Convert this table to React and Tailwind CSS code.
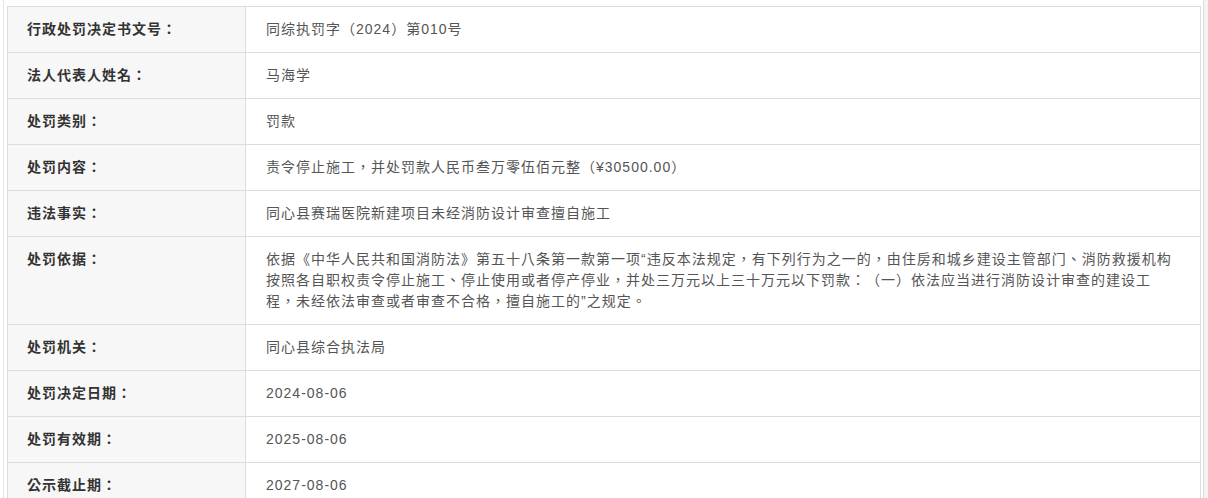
import React from "react";

const rows = [
  ["行政处罚决定书文号：", "同综执罚字（2024）第010号"],
  ["法人代表人姓名：", "马海学"],
  ["处罚类别：", "罚款"],
  ["处罚内容：", "责令停止施工，并处罚款人民币叁万零伍佰元整（¥30500.00）"],
  ["违法事实：", "同心县赛瑞医院新建项目未经消防设计审查擅自施工"],
  [
    "处罚依据：",
    "依据《中华人民共和国消防法》第五十八条第一款第一项\u201c违反本法规定，有下列行为之一的，由住房和城乡建设主管部门、消防救援机构按照各自职权责令停止施工、停止使用或者停产停业，并处三万元以上三十万元以下罚款：（一）依法应当进行消防设计审查的建设工程，未经依法审查或者审查不合格，擅自施工的\u201d之规定。",
  ],
  ["处罚机关：", "同心县综合执法局"],
  ["处罚决定日期：", "2024-08-06"],
  ["处罚有效期：", "2025-08-06"],
  ["公示截止期：", "2027-08-06"],
];

export default function App() {
  return (
    <div
      className="w-[1208px] h-[498px] overflow-hidden bg-white flex [text-spacing-trim:space-all]"
      style={{ fontFamily: '"Liberation Sans", "Noto Sans CJK TC", "Noto Sans CJK SC", sans-serif' }}
    >
      <div className="w-[3px] shrink-0" />
      <div className="w-px shrink-0 bg-[#e6e6e6]" />
      <div className="w-[3px] shrink-0" />
      <div className="w-[1194px] shrink-0 pt-[6px]">
        <div className="border-t border-l border-[#dcdcdc]">
          {rows.map(([label, value], i) => (
            <div key={i} className="flex border-b border-[#dcdcdc]">
              <div className="w-[238px] shrink-0 bg-[#f7f7f7] border-r border-[#dcdcdc] pl-[19px] pr-2 py-3 text-[14px] leading-[21px] tracking-[1px] font-bold text-[#333]">
                {label}
              </div>
              <div className="flex-1 border-r border-[#dcdcdc] pl-5 pr-5 py-3 text-[14px] leading-[21px] tracking-[1px] text-[#555]">
                {value}
              </div>
            </div>
          ))}
        </div>
      </div>
      <div className="w-[2px] shrink-0" />
      <div className="w-px shrink-0 bg-[#dedede]" />
      <div className="flex-1 bg-[#f3f3f3]" />
    </div>
  );
}
